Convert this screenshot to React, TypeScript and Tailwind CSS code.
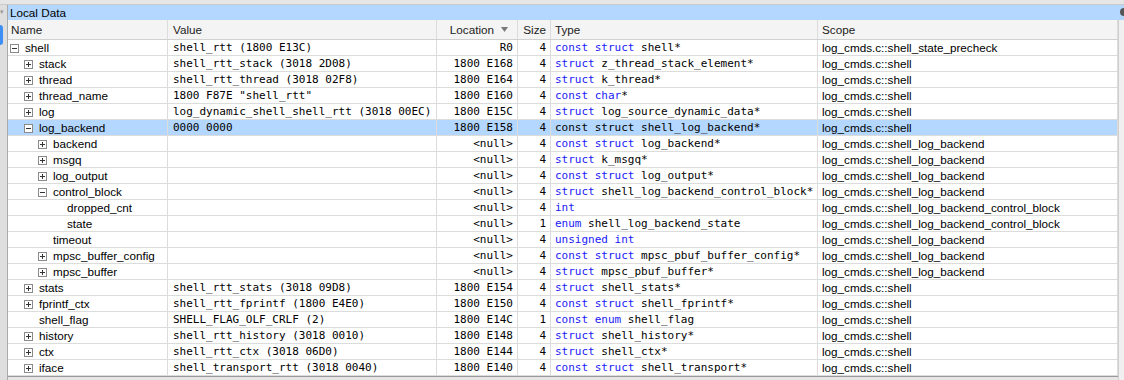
import React from 'react';

type Row = {
  name: string;
  level: number;
  toggle: 'plus' | 'minus' | null;
  value: string;
  location: string;
  size: string;
  kw: string;
  rest: string;
  scope: string;
  selected?: boolean;
};

const SCOPE_SHELL = 'log_cmds.c::shell';
const SCOPE_BACKEND = 'log_cmds.c::shell_log_backend';
const SCOPE_CB = 'log_cmds.c::shell_log_backend_control_block';

const rows: Row[] = [
  { name: 'shell', level: 0, toggle: 'minus', value: 'shell_rtt (1800 E13C)', location: 'R0', size: '4', kw: 'const struct', rest: 'shell*', scope: 'log_cmds.c::shell_state_precheck' },
  { name: 'stack', level: 1, toggle: 'plus', value: 'shell_rtt_stack (3018 2D08)', location: '1800 E168', size: '4', kw: 'struct', rest: 'z_thread_stack_element*', scope: SCOPE_SHELL },
  { name: 'thread', level: 1, toggle: 'plus', value: 'shell_rtt_thread (3018 02F8)', location: '1800 E164', size: '4', kw: 'struct', rest: 'k_thread*', scope: SCOPE_SHELL },
  { name: 'thread_name', level: 1, toggle: 'plus', value: '1800 F87E "shell_rtt"', location: '1800 E160', size: '4', kw: 'const char', rest: '*', scope: SCOPE_SHELL },
  { name: 'log', level: 1, toggle: 'plus', value: 'log_dynamic_shell_shell_rtt (3018 00EC)', location: '1800 E15C', size: '4', kw: 'struct', rest: 'log_source_dynamic_data*', scope: SCOPE_SHELL },
  { name: 'log_backend', level: 1, toggle: 'minus', value: '0000 0000', location: '1800 E158', size: '4', kw: 'const struct', rest: 'shell_log_backend*', scope: SCOPE_SHELL, selected: true },
  { name: 'backend', level: 2, toggle: 'plus', value: '', location: '<null>', size: '4', kw: 'const struct', rest: 'log_backend*', scope: SCOPE_BACKEND },
  { name: 'msgq', level: 2, toggle: 'plus', value: '', location: '<null>', size: '4', kw: 'struct', rest: 'k_msgq*', scope: SCOPE_BACKEND },
  { name: 'log_output', level: 2, toggle: 'plus', value: '', location: '<null>', size: '4', kw: 'const struct', rest: 'log_output*', scope: SCOPE_BACKEND },
  { name: 'control_block', level: 2, toggle: 'minus', value: '', location: '<null>', size: '4', kw: 'struct', rest: 'shell_log_backend_control_block*', scope: SCOPE_BACKEND },
  { name: 'dropped_cnt', level: 3, toggle: null, value: '', location: '<null>', size: '4', kw: 'int', rest: '', scope: SCOPE_CB },
  { name: 'state', level: 3, toggle: null, value: '', location: '<null>', size: '1', kw: 'enum', rest: 'shell_log_backend_state', scope: SCOPE_CB },
  { name: 'timeout', level: 2, toggle: null, value: '', location: '<null>', size: '4', kw: 'unsigned int', rest: '', scope: SCOPE_BACKEND },
  { name: 'mpsc_buffer_config', level: 2, toggle: 'plus', value: '', location: '<null>', size: '4', kw: 'const struct', rest: 'mpsc_pbuf_buffer_config*', scope: SCOPE_BACKEND },
  { name: 'mpsc_buffer', level: 2, toggle: 'plus', value: '', location: '<null>', size: '4', kw: 'struct', rest: 'mpsc_pbuf_buffer*', scope: SCOPE_BACKEND },
  { name: 'stats', level: 1, toggle: 'plus', value: 'shell_rtt_stats (3018 09D8)', location: '1800 E154', size: '4', kw: 'struct', rest: 'shell_stats*', scope: SCOPE_SHELL },
  { name: 'fprintf_ctx', level: 1, toggle: 'plus', value: 'shell_rtt_fprintf (1800 E4E0)', location: '1800 E150', size: '4', kw: 'const struct', rest: 'shell_fprintf*', scope: SCOPE_SHELL },
  { name: 'shell_flag', level: 1, toggle: null, value: 'SHELL_FLAG_OLF_CRLF (2)', location: '1800 E14C', size: '1', kw: 'const enum', rest: 'shell_flag', scope: SCOPE_SHELL },
  { name: 'history', level: 1, toggle: 'plus', value: 'shell_rtt_history (3018 0010)', location: '1800 E148', size: '4', kw: 'struct', rest: 'shell_history*', scope: SCOPE_SHELL },
  { name: 'ctx', level: 1, toggle: 'plus', value: 'shell_rtt_ctx (3018 06D0)', location: '1800 E144', size: '4', kw: 'struct', rest: 'shell_ctx*', scope: SCOPE_SHELL },
  { name: 'iface', level: 1, toggle: 'plus', value: 'shell_transport_rtt (3018 0040)', location: '1800 E140', size: '4', kw: 'const struct', rest: 'shell_transport*', scope: SCOPE_SHELL },
];

const sans = "font-['Liberation_Sans',Arial,sans-serif] text-[11.7px]";
const mono = "font-['DejaVu_Sans_Mono',monospace] text-[11px]";
const cols = 'grid grid-cols-[160px_269px_81px_33px_267px_300px]';

const Toggle = ({ kind }: { kind: 'plus' | 'minus' }) => (
  <svg width="9" height="9" viewBox="0 0 9 9" className="shrink-0">
    <rect x="0.5" y="0.5" width="8" height="8" fill="white" stroke="#8a8a8a" />
    <path d="M2 4.5h5" stroke="#333" />
    {kind === 'plus' && <path d="M4.5 2v5" stroke="#333" />}
  </svg>
);

const cell = 'h-[16px] pt-[1px] border-r border-b border-[#dcdcdc] flex items-center overflow-hidden whitespace-nowrap';

const TableRow = ({ row }: { row: Row }) => {
  const kwColor = row.selected ? 'text-black' : 'text-[#1a1af8]';
  return (
    <div className={`${cols} ${row.selected ? 'bg-[#b3d7ff]' : 'bg-white'} text-black`}>
      <div className={`${cell} ${sans}`}>
        <div style={{ width: 2 + row.level * 14 }} className="shrink-0" />
        <div className="w-[15px] shrink-0 flex items-center">
          {row.toggle && <Toggle kind={row.toggle} />}
        </div>
        <span>{row.name}</span>
      </div>
      <div className={`${cell} ${mono} pl-[5px]`}>{row.value}</div>
      <div className={`${cell} ${mono} justify-end pr-[4px]`}>{row.location}</div>
      <div className={`${cell} ${mono} justify-end pr-[4px]`}>{row.size}</div>
      <div className={`${cell} ${mono} pl-[4px]`}>
        <span className={kwColor}>{row.kw}</span>
        {row.rest && <span>{row.rest === '*' ? '*' : '\u00a0' + row.rest}</span>}
      </div>
      <div className={`${cell} ${sans} pl-[4px]`}>{row.scope}</div>
    </div>
  );
};

const App = () => {
  return (
    <div className="w-[1124px] h-[380px] bg-[#e6e6e6] flex flex-col overflow-hidden">
      <div className="h-[5px] border-b border-[#c9c9c9] shrink-0" />
      <div className="flex flex-1 min-h-0">
        <div className="w-[8px] shrink-0 border-r border-[#a9a9a9] bg-[#dedede] flex flex-col">
          <div className="h-[20px] text-[7px] leading-[14px] text-[#999] font-['DejaVu_Sans',sans-serif]">▾</div>
          <div className="h-[20px] w-[3px] rounded-r-[3px] bg-[#3d8ef5]" />
        </div>
        <div className="flex-1 flex flex-col min-w-0">
          <div className="h-[15px] bg-[#b3d7ff] flex items-center pl-[2px] pt-[1px] relative shrink-0">
            <span className={`${sans} leading-none text-black`}>Local Data</span>
            <div className="absolute right-[-4px] top-[3px] w-[8px] h-[8px] rounded-full bg-[#555]" />
          </div>
          <div className="flex flex-1 min-h-0">
            <div className="w-[1110px] flex flex-col">
              <div className={`${cols} h-[20px] bg-[#f4f4f4] border-b border-[#d0d0d0] ${sans} text-[#222]`}>
                <div className="border-r border-[#dcdcdc] flex items-center pl-[3px]">Name</div>
                <div className="border-r border-[#dcdcdc] flex items-center pl-[5px]">Value</div>
                <div className="border-r border-[#dcdcdc] flex items-center justify-end pr-[9px] gap-[7px]">
                  <span>Location</span>
                  <svg width="7" height="7" viewBox="0 0 7 7"><path d="M0 1h7L3.5 6z" fill="#7a7a7a" /></svg>
                </div>
                <div className="border-r border-[#dcdcdc] flex items-center justify-end pr-[4px]">Size</div>
                <div className="border-r border-[#dcdcdc] flex items-center pl-[4px]">Type</div>
                <div className="border-r border-[#dcdcdc] flex items-center pl-[4px]">Scope</div>
              </div>
              <div className="flex flex-col">
                {rows.map((row, i) => (
                  <TableRow key={i} row={row} />
                ))}
              </div>
              <div className="border-t border-[#9a9a9a] flex-1" />
            </div>
            <div className="flex-1 border-l border-[#cfcfcf] bg-[#f0f0f0]" />
          </div>
        </div>
      </div>
    </div>
  );
};

export default App;
